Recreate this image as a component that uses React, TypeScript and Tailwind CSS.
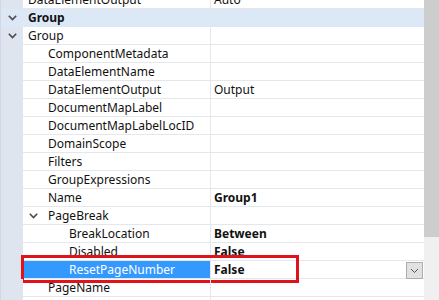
import React from 'react'

type Row = {
    name: string
    value?: string
    level: number
    bold?: boolean
    expand?: boolean
    selected?: boolean
}

const rows: Row[] = [
    { name: 'Group', level: 1, expand: true },
    { name: 'ComponentMetadata', level: 2 },
    { name: 'DataElementName', level: 2 },
    { name: 'DataElementOutput', level: 2, value: 'Output' },
    { name: 'DocumentMapLabel', level: 2 },
    { name: 'DocumentMapLabelLocID', level: 2 },
    { name: 'DomainScope', level: 2 },
    { name: 'Filters', level: 2 },
    { name: 'GroupExpressions', level: 2 },
    { name: 'Name', level: 2, value: 'Group1', bold: true },
    { name: 'PageBreak', level: 2, expand: true },
    { name: 'BreakLocation', level: 3, value: 'Between', bold: true },
    { name: 'Disabled', level: 3, value: 'False', bold: true },
    { name: 'ResetPageNumber', level: 3, value: 'False', bold: true, selected: true },
    { name: 'PageName', level: 2 },
    { name: '', level: 2 },
]

const Chevron = () => (
    <svg width="9" height="6" viewBox="0 0 9 6" fill="none">
        <path d="M0.8 0.8 L4.5 4.6 L8.2 0.8" stroke="#4a4a4a" strokeWidth="1.6" />
    </svg>
)

const namePad: Record<number, string> = {
    1: 'pl-[5px]',
    2: 'pl-[25px]',
    3: 'pl-[46px]',
}

function PropRow({ row }: { row: Row }) {
    return (
        <div className="relative flex h-[18px] shrink-0">
            <div className="w-[23px] shrink-0 bg-[#dfe5ee] border-l border-[#cfd8e4] flex items-center justify-center">
                {row.expand && row.level === 1 && <Chevron />}
            </div>
            <div
                className={`w-[188px] shrink-0 flex items-center border-b border-r border-[#e4e8ec] ${namePad[row.level]} ${
                    row.selected ? 'bg-[#3399ff] text-white' : 'text-[#111]'
                } relative`}
            >
                {row.expand && row.level === 2 && (
                    <span className="absolute left-[6px] top-[6px]">
                        <Chevron />
                    </span>
                )}
                {row.name}
            </div>
            <div className={`flex-1 flex items-center pl-[3px] border-b border-[#e4e8ec] text-[#111] ${row.bold ? 'font-bold' : ''}`}>
                {row.value}
            </div>
            {row.selected && (
                <>
                    <div className="absolute right-[1px] top-[1px] w-[17px] h-[17px] bg-[#e1e1e1] border border-[#adadad] flex items-center justify-center">
                        <svg width="9" height="6" viewBox="0 0 9 6" fill="none">
                            <path d="M1 1 L4.5 4.5 L8 1" stroke="#555" strokeWidth="1" />
                        </svg>
                    </div>
                    <div className="absolute left-[21px] top-[-6px] w-[278px] h-[28px] border-[3px] border-[#e0121c] pointer-events-none" />
                </>
            )}
        </div>
    )
}

export default function App() {
    return (
        <div
            className="w-[439px] h-[300px] overflow-hidden bg-white flex text-[12px]"
            style={{ fontFamily: '"Noto Sans", "Open Sans", sans-serif' }}
        >
            <div className="w-[424px] shrink-0 flex flex-col -mt-[9px] leading-none">
                {/* previous category tail */}
                <div className="flex h-[18px] shrink-0">
                    <div className="w-[23px] shrink-0 bg-[#dfe5ee] border-l border-[#cfd8e4]" />
                    <div className="w-[188px] shrink-0 flex items-center pl-[5px] border-b border-r border-[#e4e8ec] text-[#111]">
                        DataElementOutput
                    </div>
                    <div className="flex-1 flex items-center pl-[3px] border-b border-[#e4e8ec] text-[#111]">Auto</div>
                </div>
                {/* category header */}
                <div className="flex h-[18px] shrink-0 bg-[#dde8f7]">
                    <div className="w-[23px] shrink-0 flex items-center justify-center border-l border-[#cfd8e4]">
                        <Chevron />
                    </div>
                    <div className="flex items-center pl-[5px] font-bold text-[#111]">Group</div>
                </div>
                {rows.map((r, i) => (
                    <PropRow key={i} row={r} />
                ))}
            </div>
            <div className="w-[15px] shrink-0 flex flex-col">
                <div className="h-[237px] bg-[#cdcdcd]" />
                <div className="flex-1 bg-[#f0f0f0]" />
            </div>
        </div>
    )
}
